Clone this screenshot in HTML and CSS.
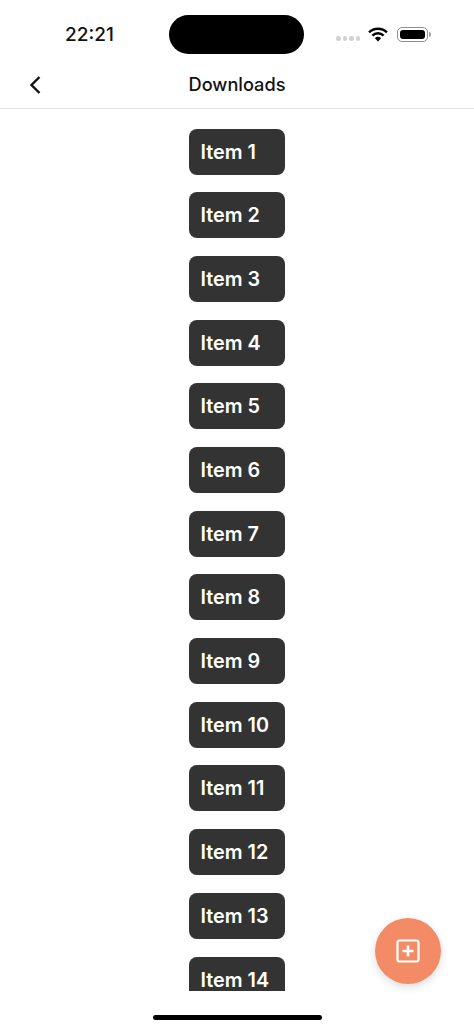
FILE: index.html
```html
<!DOCTYPE html>
<html lang="en">

<head>
  <meta charset="UTF-8" />
  <meta name="viewport" content="width=device-width, initial-scale=1.0" />
  <title>Downloads</title>
  <link rel="stylesheet" href="styles.css">
</head>

<body>
  <div class="screen">
    <div class="status-bar">
      <span class="time">22:21</span>
      <div class="island"></div>
      <div class="status-icons">
        <div class="signal">
          <span></span><span></span><span></span><span></span>
        </div>
        <svg class="wifi" width="20" height="15" viewBox="0 0 22 16">
          <path d="M1.2 5.6a14 14 0 0 1 19.6 0" fill="none" stroke="#000" stroke-width="2.7" />
          <path d="M4.8 9.2a9 9 0 0 1 12.4 0" fill="none" stroke="#000" stroke-width="2.7" />
          <path d="M7.6 12a4.9 4.9 0 0 1 6.8 0L11 15.6z" fill="#000" />
        </svg>
        <div class="battery">
          <div class="battery-fill"></div>
        </div>
        <div class="battery-cap"></div>
      </div>
    </div>

    <header class="nav-bar">
      <button class="back" aria-label="Back">
        <svg width="14" height="20" viewBox="0 0 14 20">
          <path d="M11.5 2 3.5 10l8 8" fill="none" stroke="#111" stroke-width="2.4" />
        </svg>
      </button>
      <h1>Downloads</h1>
    </header>

    <main class="list">
      <button class="item">Item 1</button>
      <button class="item">Item 2</button>
      <button class="item">Item 3</button>
      <button class="item">Item 4</button>
      <button class="item">Item 5</button>
      <button class="item">Item 6</button>
      <button class="item">Item 7</button>
      <button class="item">Item 8</button>
      <button class="item">Item 9</button>
      <button class="item">Item 10</button>
      <button class="item">Item 11</button>
      <button class="item">Item 12</button>
      <button class="item">Item 13</button>
      <button class="item">Item 14</button>
    </main>

    <button class="fab" aria-label="Add">
      <svg width="24" height="24" viewBox="0 0 24 24">
        <rect x="1.5" y="1.5" width="21" height="21" rx="2" fill="none" stroke="#fff" stroke-width="2.2" />
        <path d="M12 6.5v11M6.5 12h11" fill="none" stroke="#fff" stroke-width="2.6" />
      </svg>
    </button>

    <div class="home-indicator"></div>
  </div>
</body>

</html>
```

FILE: styles.css
```css
* {
  box-sizing: border-box;
}

html,
body {
  margin: 0;
  height: 100%;
}

body {
  font-family: Inter, "Liberation Sans", sans-serif;
  background-color: #fff;
  color: #111;
}

.screen {
  position: relative;
  width: 474px;
  height: 1029px;
  display: flex;
  flex-direction: column;
  overflow: hidden;
  background-color: #fff;
}

.status-bar {
  height: 60px;
  flex-shrink: 0;
  display: flex;
  align-items: center;
  padding-top: 8px;
  padding-left: 65px;
}

.time {
  width: 104px;
  font-size: 19px;
  font-weight: 500;
  line-height: 24px;
  margin-top: 1px;
}

.island {
  width: 135px;
  height: 39px;
  border-radius: 20px;
  background-color: #000;
  margin-top: 1px;
}

.status-icons {
  display: flex;
  align-items: center;
  margin-left: 32px;
}

.signal {
  display: flex;
  gap: 2px;
  margin-top: 9px;
  margin-right: 8px;
}

.signal span {
  width: 4.5px;
  height: 4.5px;
  border-radius: 50%;
  background-color: #d2d2d2;
}

.wifi {
  margin-right: 9px;
}

.battery {
  width: 31px;
  height: 15px;
  padding: 2px;
  border: 1px solid #8e8e8e;
  border-radius: 5px;
}

.battery-fill {
  height: 100%;
  border-radius: 3px;
  background-color: #000;
}

.battery-cap {
  width: 2px;
  height: 5px;
  margin-left: 1px;
  border-radius: 0 2px 2px 0;
  background-color: #a0a0a0;
}

.nav-bar {
  height: 49px;
  flex-shrink: 0;
  display: flex;
  align-items: center;
  justify-content: center;
  position: relative;
  border-bottom: 1px solid #e4e4e4;
}

.nav-bar h1 {
  margin: 0;
  font-size: 18.2px;
  font-weight: 500;
  line-height: 24px;
}

.back {
  position: absolute;
  left: 28px;
  top: 15px;
  padding: 0;
  border: none;
  background: none;
  line-height: 0;
}

.list {
  height: 882px;
  flex-shrink: 0;
  overflow: hidden;
  display: flex;
  flex-direction: column;
  align-items: center;
  gap: 17.7px;
  padding-top: 19.6px;
}

.item {
  width: 96px;
  height: 46px;
  flex-shrink: 0;
  padding: 0 0 0 11.5px;
  border: none;
  border-radius: 8px;
  background-color: #333;
  color: #fff;
  font-family: inherit;
  font-size: 19.8px;
  font-weight: 600;
  text-align: left;
}

.fab {
  position: absolute;
  left: 375px;
  top: 918px;
  width: 66px;
  height: 66px;
  padding: 0;
  border: none;
  border-radius: 50%;
  background-color: #f38b67;
  box-shadow: 0 3px 8px rgba(0, 0, 0, 0.14);
  display: flex;
  align-items: center;
  justify-content: center;
}

.home-indicator {
  position: absolute;
  left: 153px;
  top: 1015px;
  width: 169px;
  height: 5px;
  border-radius: 3px;
  background-color: #000;
}
```
